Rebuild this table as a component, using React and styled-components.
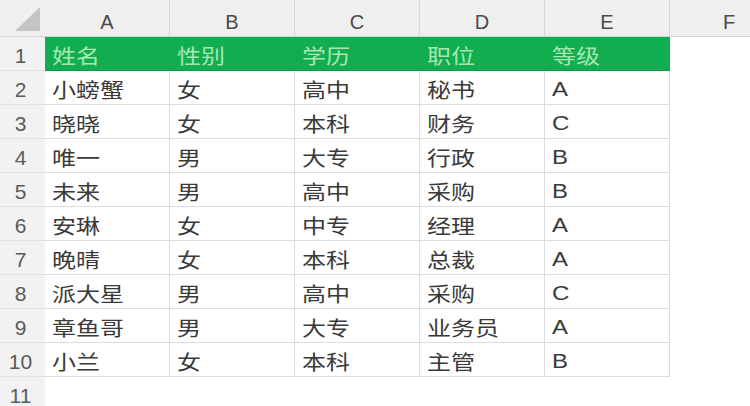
import React from "react";
import styled, { createGlobalStyle } from "styled-components";

const GlobalStyle = createGlobalStyle`
  html, body {
    margin: 0;
    padding: 0;
    background: #fff;
  }
  body {
    font-family: "Liberation Sans", "Noto Sans CJK SC", sans-serif;
  }
`;

const columns = ["A", "B", "C", "D", "E"];

const header = ["姓名", "性别", "学历", "职位", "等级"];

const rows = [
  ["小螃蟹", "女", "高中", "秘书", "A"],
  ["晓晓", "女", "本科", "财务", "C"],
  ["唯一", "男", "大专", "行政", "B"],
  ["未来", "男", "高中", "采购", "B"],
  ["安琳", "女", "中专", "经理", "A"],
  ["晚晴", "女", "本科", "总裁", "A"],
  ["派大星", "男", "高中", "采购", "C"],
  ["章鱼哥", "男", "大专", "业务员", "A"],
  ["小兰", "女", "本科", "主管", "B"],
];

export default function App() {
  return (
    <>
      <GlobalStyle />
      <Sheet>
        <HeadRow>
          <Corner>
            <svg width="30" height="28" viewBox="0 0 30 28">
              <polygon points="28,2 28,26 3,26" fill="#c4c4c4" />
            </svg>
          </Corner>
          {columns.map((c) => (
            <ColHead key={c}>{c}</ColHead>
          ))}
          <ColHead last>F</ColHead>
        </HeadRow>

        <Row>
          <RowNum>1</RowNum>
          {header.map((h) => (
            <Cell key={h} title>
              <Text>{h}</Text>
            </Cell>
          ))}
          <Filler />
        </Row>

        {rows.map((r, i) => (
          <Row key={i}>
            <RowNum>{i + 2}</RowNum>
            {r.map((v, j) => (
              <Cell key={j}>
                <Text>{v}</Text>
              </Cell>
            ))}
            <Filler />
          </Row>
        ))}

        <Row>
          <RowNum>11</RowNum>
          <Filler />
        </Row>
      </Sheet>
    </>
  );
}

const Sheet = styled.div`
  width: 750px;
  height: 406px;
  overflow: hidden;
  background: #fff;
  display: flex;
  flex-direction: column;
`;

const HeadRow = styled.div`
  display: flex;
  height: 36px;
  flex-shrink: 0;
  background: #efefef;
  border-bottom: 1px solid #d4d4d4;
`;

const Corner = styled.div`
  width: 45px;
  flex-shrink: 0;
  display: flex;
  align-items: flex-end;
  justify-content: flex-end;
  padding: 0 3px 3px 0;
  box-sizing: border-box;
`;

const ColHead = styled.div`
  width: ${(p) => (p.last ? "auto" : "125px")};
  flex: ${(p) => (p.last ? "1" : "none")};
  box-sizing: border-box;
  border-right: ${(p) => (p.last ? "none" : "1px solid #d6d6d6")};
  display: flex;
  align-items: center;
  justify-content: ${(p) => (p.last ? "flex-start" : "center")};
  padding-left: ${(p) => (p.last ? "53px" : "0")};
  padding-top: 8px;
  font-size: 20px;
  color: #4a4a4a;
`;

const Row = styled.div`
  display: flex;
  height: 34px;
  flex-shrink: 0;
`;

const RowNum = styled.div`
  width: 45px;
  flex-shrink: 0;
  box-sizing: border-box;
  background: #f2f2f2;
  border-bottom: 1px solid #e2e2e2;
  display: flex;
  align-items: center;
  justify-content: center;
  padding: 4px 4px 0 0;
  font-size: 21px;
  color: #5a5a5a;
`;

const Cell = styled.div`
  width: 125px;
  flex-shrink: 0;
  box-sizing: border-box;
  background: ${(p) => (p.title ? "#12ad4f" : "#fff")};
  color: ${(p) => (p.title ? "#a3e8b2" : "#3a3a3a")};
  border-right: 1px solid ${(p) => (p.title ? "#12ad4f" : "#dcdcdc")};
  border-bottom: 1px solid ${(p) => (p.title ? "#0e9a45" : "#dcdcdc")};
  display: flex;
  align-items: center;
  padding: 4px 0 0 7px;
  overflow: visible;
  white-space: nowrap;
  font-family: "Liberation Sans", "Noto Sans CJK SC", sans-serif;
  font-size: 20px;
`;

const Text = styled.span`
  display: inline-block;
  transform: scaleX(1.2);
  transform-origin: left center;
`;

const Filler = styled.div`
  flex: 1;
`;
